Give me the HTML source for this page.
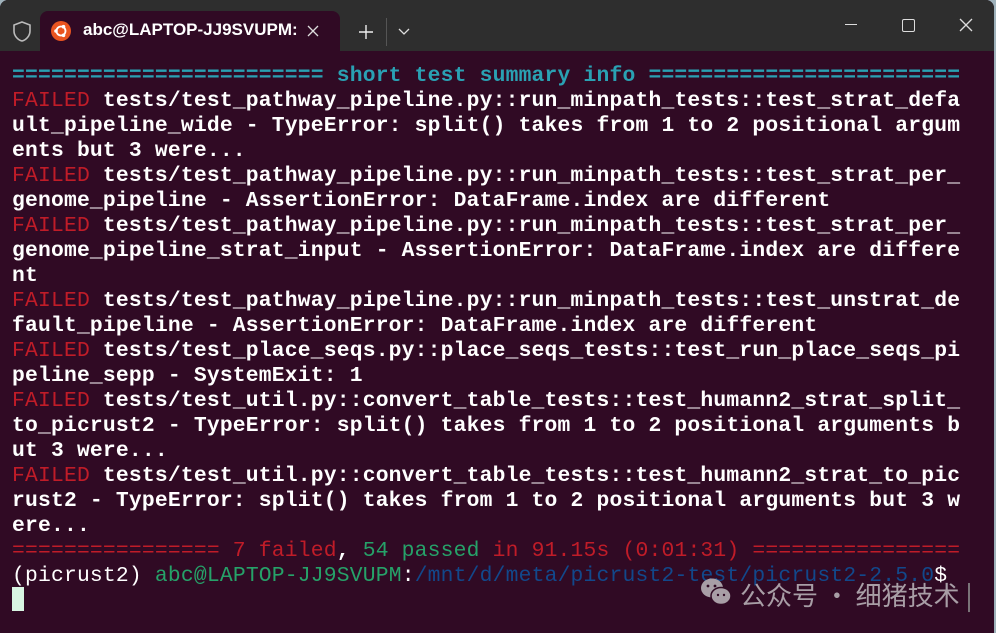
<!DOCTYPE html>
<html><head><meta charset="utf-8"><style>
html,body{margin:0;padding:0;width:996px;height:633px;overflow:hidden;background:#9fb2bb}
.win{position:absolute;left:0;top:0;width:994px;height:633px;background:#300a24;border-radius:8px 8px 0 0;overflow:hidden}
.tb{position:absolute;left:0;top:0;width:100%;height:51px;background:#2e2e2e}
.tab{position:absolute;left:40px;top:11px;width:300px;height:40px;background:#300a24;border-radius:8px 8px 0 0}
.tab .t{position:absolute;left:43px;top:9px;font:17px "Liberation Sans",sans-serif;color:#fff;font-weight:bold;white-space:nowrap;width:246px;overflow:hidden}
.term{position:absolute;left:12px;top:64px;font-family:"Liberation Mono",monospace;font-size:21.33px;letter-spacing:0.19px;line-height:25px;color:#fff;font-weight:bold;white-space:pre}
.c{color:#2aa1b3}.r{color:#c01c28;font-weight:normal}.g{color:#26a269}.b{color:#12488b;font-weight:normal}
.cur{position:absolute;left:12px;top:587px;width:12px;height:24px;background:#d8f5e2}
.wm{position:absolute;left:740px;top:576px;font:26px "Noto Sans CJK SC",sans-serif;color:#a89ea6;white-space:nowrap}
</style></head><body>
<div class="win">
<div class="tb">
<svg style="position:absolute;left:12px;top:21px" width="20" height="22" viewBox="0 0 20 22"><path d="M10 1 L18 4 V10 C18 15 14 19 10 20 C6 19 2 15 2 10 V4 Z" fill="none" stroke="#bbb" stroke-width="1.6"/></svg>
<div class="tab">
<svg style="position:absolute;left:11px;top:10px" width="20" height="20" viewBox="0 0 20 20"><circle cx="10" cy="10" r="10" fill="#e95420"/><circle cx="10" cy="10" r="4.5" fill="none" stroke="#fff" stroke-width="1.8"/><circle cx="5" cy="10" r="1.8" fill="#fff"/><circle cx="12.5" cy="5.7" r="1.8" fill="#fff"/><circle cx="12.5" cy="14.3" r="1.8" fill="#fff"/></svg>
<div class="t">abc@LAPTOP-JJ9SVUPM:</div>
<svg style="position:absolute;left:267px;top:14px" width="12" height="12"><path d="M1 1L11 11M11 1L1 11" stroke="#ddd" stroke-width="1.3"/></svg>
</div>
<svg style="position:absolute;left:358px;top:24px" width="16" height="16"><path d="M8 1V15M1 8H15" stroke="#eee" stroke-width="1.4"/></svg>
<div style="position:absolute;left:386px;top:18px;width:1px;height:28px;background:#555"></div>
<svg style="position:absolute;left:398px;top:28px" width="12" height="8"><path d="M1 1L6 6L11 1" fill="none" stroke="#ddd" stroke-width="1.3"/></svg>
<div style="position:absolute;left:845px;top:24px;width:12px;height:1.3px;background:#ddd"></div>
<div style="position:absolute;left:902px;top:19px;width:11px;height:11px;border:1.3px solid #ddd;border-radius:2px"></div>
<svg style="position:absolute;left:959px;top:18px" width="14" height="14"><path d="M1 1L13 13M13 1L1 13" stroke="#ddd" stroke-width="1.3"/></svg>
</div>
<div class="term"><span class="c">======================== short test summary info ========================</span>
<span class="r">FAILED</span> tests/test_pathway_pipeline.py::run_minpath_tests::test_strat_defa
ult_pipeline_wide - TypeError: split() takes from 1 to 2 positional argum
ents but 3 were...
<span class="r">FAILED</span> tests/test_pathway_pipeline.py::run_minpath_tests::test_strat_per_
genome_pipeline - AssertionError: DataFrame.index are different
<span class="r">FAILED</span> tests/test_pathway_pipeline.py::run_minpath_tests::test_strat_per_
genome_pipeline_strat_input - AssertionError: DataFrame.index are differe
nt
<span class="r">FAILED</span> tests/test_pathway_pipeline.py::run_minpath_tests::test_unstrat_de
fault_pipeline - AssertionError: DataFrame.index are different
<span class="r">FAILED</span> tests/test_place_seqs.py::place_seqs_tests::test_run_place_seqs_pi
peline_sepp - SystemExit: 1
<span class="r">FAILED</span> tests/test_util.py::convert_table_tests::test_humann2_strat_split_
to_picrust2 - TypeError: split() takes from 1 to 2 positional arguments b
ut 3 were...
<span class="r">FAILED</span> tests/test_util.py::convert_table_tests::test_humann2_strat_to_pic
rust2 - TypeError: split() takes from 1 to 2 positional arguments but 3 w
ere...
<span class="r">================ 7 failed</span>, <span class="g" style="font-weight:normal">54 passed</span><span class="r"> in 91.15s (0:01:31) ================</span>
<span style="font-weight:normal">(picrust2) </span><span class="g" style="font-weight:normal">abc@LAPTOP-JJ9SVUPM</span><span style="font-weight:normal">:</span><span class="b">/mnt/d/meta/picrust2-test/picrust2-2.5.0</span><span style="font-weight:normal">$</span></div>
<div class="cur"></div>
<svg style="position:absolute;left:700px;top:577px" width="32" height="30" viewBox="0 0 32 30"><ellipse cx="12" cy="11" rx="11" ry="9.5" fill="#a89ea6"/><ellipse cx="21" cy="19" rx="10" ry="8.5" fill="#a89ea6" stroke="#300a24" stroke-width="1.5"/><circle cx="8" cy="9" r="1.4" fill="#300a24"/><circle cx="15" cy="9" r="1.4" fill="#300a24"/><circle cx="18" cy="18" r="1.2" fill="#300a24"/><circle cx="24" cy="18" r="1.2" fill="#300a24"/></svg>
<div class="wm">公众号 · 细猪技术 <span style="color:#888">|</span></div>
</div>
</body></html>
